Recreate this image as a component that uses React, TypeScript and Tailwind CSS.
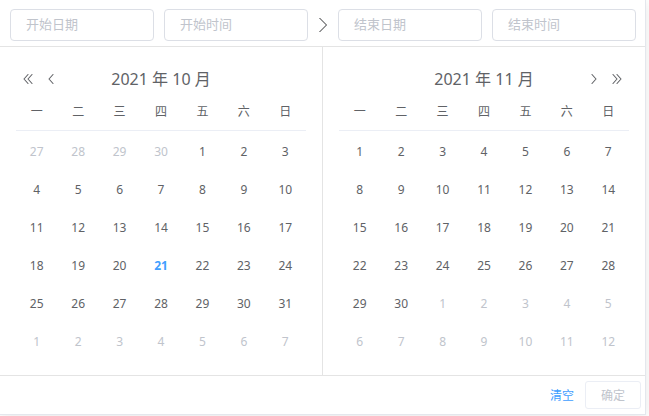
import React from "react";

type Day = { d: number; kind: "cur" | "other" | "today" };

const weekNames = ["一", "二", "三", "四", "五", "六", "日"];

function buildOct(): Day[] {
  const out: Day[] = [];
  [27, 28, 29, 30].forEach((d) => out.push({ d, kind: "other" }));
  for (let i = 1; i <= 31; i++) out.push({ d: i, kind: i === 21 ? "today" : "cur" });
  for (let i = 1; i <= 7; i++) out.push({ d: i, kind: "other" });
  return out;
}

function buildNov(): Day[] {
  const out: Day[] = [];
  for (let i = 1; i <= 30; i++) out.push({ d: i, kind: "cur" });
  for (let i = 1; i <= 12; i++) out.push({ d: i, kind: "other" });
  return out;
}

const Chev = ({ d }: { d: string }) => (
  <svg width="12" height="12" viewBox="0 0 12 12" fill="none" className="shrink-0">
    <path d={d} stroke="#606266" strokeWidth="1.1" strokeLinecap="round" strokeLinejoin="round" />
  </svg>
);

function Table({ days }: { days: Day[] }) {
  return (
    <div className="w-[290px]">
      <div className="grid grid-cols-7 h-[38px] border-b border-[#ebeef5] items-center text-[12px] text-[#606266]">
        {weekNames.map((w) => (
          <div key={w} className="text-center">
            {w}
          </div>
        ))}
      </div>
      <div className="grid grid-cols-7">
        {days.map((x, i) => (
          <div
            key={i}
            className={
              "h-[38px] pt-[4px] flex items-center justify-center text-[12px] " +
              (x.kind === "other"
                ? "text-[#c0c4cc]"
                : x.kind === "today"
                ? "text-[#409eff] font-bold"
                : "text-[#606266]")
            }
          >
            {x.d}
          </div>
        ))}
      </div>
    </div>
  );
}

function Input({ ph }: { ph: string }) {
  return (
    <div className="w-[144px] h-[32px] border border-[#dcdfe6] rounded-[4px] flex items-center pl-[15px] text-[13px] text-[#c0c4cc] bg-white">
      {ph}
    </div>
  );
}

export default function App() {
  return (
    <div className="w-[649px] h-[416px] bg-white overflow-hidden font-['Noto_Sans','Noto_Sans_CJK_SC',sans-serif]">
      <div className="w-[646px] bg-white border-r border-b border-[#e4e7ed] shadow-[0_2px_12px_0_rgba(0,0,0,0.1)]">
        {/* header */}
        <div className="flex items-center pl-[10px] pt-[9px] pb-[5px] border-b border-[#e4e4e4]">
          <Input ph="开始日期" />
          <div className="ml-[10px]">
            <Input ph="开始时间" />
          </div>
          <div className="w-[30px] flex justify-center">
            <svg width="10" height="16" viewBox="0 0 10 16" fill="none">
              <path d="M1.5 1 L8.5 8 L1.5 15" stroke="#303133" strokeWidth="1" />
            </svg>
          </div>
          <Input ph="结束日期" />
          <div className="ml-[10px]">
            <Input ph="结束时间" />
          </div>
        </div>
        {/* body */}
        <div className="flex">
          <div className="w-[323px] px-[16px] pt-[18px] pb-[16px] border-r border-[#e4e4e4]">
            <div className="grid grid-cols-[1fr_auto_1fr] items-center h-[28px]">
              <div className="flex items-center">
                <span className="ml-[6px]">
                  <Chev d="M6 1.5 L2 6 L6 10.5 M10 1.5 L6 6 L10 10.5" />
                </span>
                <span className="ml-[11px]">
                  <Chev d="M8 1.5 L4 6 L8 10.5" />
                </span>
              </div>
              <div className="text-[16px] text-[#606266] leading-[28px]">2021 年 10 月</div>
              <div />
            </div>
            <Table days={buildOct()} />
          </div>
          <div className="w-[322px] px-[16px] pt-[18px] pb-[16px]">
            <div className="grid grid-cols-[1fr_auto_1fr] items-center h-[28px]">
              <div />
              <div className="text-[16px] text-[#606266] leading-[28px]">2021 年 11 月</div>
              <div className="flex items-center justify-end">
                <Chev d="M4 1.5 L8 6 L4 10.5" />
                <span className="ml-[11px] mr-[6px]">
                  <Chev d="M2 1.5 L6 6 L2 10.5 M6 1.5 L10 6 L6 10.5" />
                </span>
              </div>
            </div>
            <Table days={buildNov()} />
          </div>
        </div>
        {/* footer */}
        <div className="flex items-center justify-end border-t border-[#e4e4e4] py-[5px] pr-[4px]">
          <span className="text-[12px] text-[#409eff] mr-[11px] pt-[2px]">清空</span>
          <div className="h-[28px] w-[56px] pt-[2px] border border-[#ebeef5] rounded-[3px] flex items-center justify-center text-[12px] text-[#c0c4cc] bg-white">
            确定
          </div>
        </div>
      </div>
    </div>
  );
}
